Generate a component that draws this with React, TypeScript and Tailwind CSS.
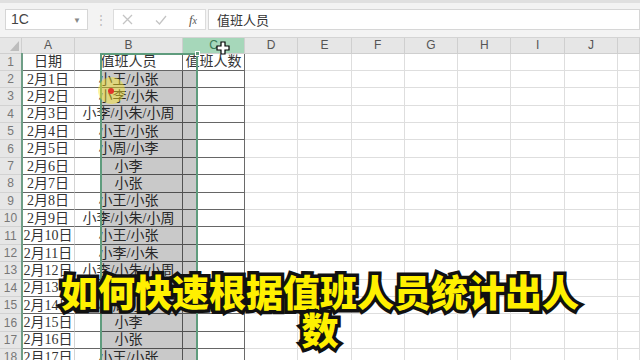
import React from 'react'

const cols = ['A', 'B', 'C', 'D', 'E', 'F', 'G', 'H', 'I', 'J', '']

const rows: [string, string, string][] = [
  ['日期', '值班人员', '值班人数'],
  ['2月1日', '小王/小张', ''],
  ['2月2日', '小李/小朱', ''],
  ['2月3日', '小李/小朱/小周', ''],
  ['2月4日', '小王/小张', ''],
  ['2月5日', '小周/小李', ''],
  ['2月6日', '小李', ''],
  ['2月7日', '小张', ''],
  ['2月8日', '小王/小张', ''],
  ['2月9日', '小李/小朱/小周', ''],
  ['2月10日', '小王/小张', ''],
  ['2月11日', '小李/小朱', ''],
  ['2月12日', '小李/小朱/小周', ''],
  ['2月13日', '小王/小张', ''],
  ['2月14日', '小周/小李', ''],
  ['2月15日', '小李', ''],
  ['2月16日', '小张', ''],
  ['2月17日', '小王/小张', ''],
]

const cellFont = { fontFamily: '"Liberation Serif", "Noto Sans CJK SC", serif' }

function FormulaBar() {
  return (
    <div className="h-[38px] bg-[#f3f3f3] border-t-[3px] border-[#e0e0e0] flex items-start pt-[6px] border-b border-b-[#d4d4d4]">
      <div className="ml-[5px] w-[83px] h-[21px] bg-white border border-[#d6d6d6] flex items-center justify-between pl-[5px] pr-[6px]">
        <span className="text-[14px] text-[#444] font-['Liberation_Sans',sans-serif]">1C</span>
        <span className="text-[8px] text-[#888]">▼</span>
      </div>
      <div className="w-[25px] h-[21px] flex items-center justify-center text-[#bbb] text-[12px]">⋮</div>
      <div className="w-[93px] h-[21px] bg-white border border-[#dcdcdc] flex items-center justify-between px-[8px]">
        <svg width="11" height="11" viewBox="0 0 11 11">
          <path d="M1 1L10 10M10 1L1 10" stroke="#c4c4c4" strokeWidth="1.3" fill="none" />
        </svg>
        <svg width="12" height="10" viewBox="0 0 12 10">
          <path d="M1 5.5L4.5 9L11 1" stroke="#c4c4c4" strokeWidth="1.3" fill="none" />
        </svg>
        <span className="text-[13px] italic text-[#555] font-['Liberation_Serif',serif]">f<span className="text-[10px]">x</span></span>
      </div>
      <div className="ml-[2px] flex-1 h-[21px] bg-white border border-[#d6d6d6] flex items-center pl-[8px]">
        <span className="text-[13px] text-[#333] font-['Noto_Sans_CJK_SC',sans-serif]">值班人员</span>
      </div>
    </div>
  )
}

function Grid() {
  return (
    <div className="grid grid-cols-[22px_53px_108px_62px_repeat(6,53.3px)_53.3px_1fr] grid-rows-[15.5px_repeat(18,17.4px)]">
      <div className="bg-[#e6e6e6] border-r border-b border-[#cfcfcf] relative">
        <svg className="absolute right-[2px] bottom-[2px]" width="9" height="10" viewBox="0 0 9 10">
          <path d="M9 0V10H0Z" fill="#bdbdbd" />
        </svg>
      </div>
      {cols.map((c, i) => (
        <div
          key={'h' + i}
          className={
            'border-r border-b border-[#cfcfcf] flex items-center justify-center text-[12px] font-["Liberation_Sans",sans-serif] ' +
            (c === 'C' ? 'bg-[#a6d7ba] text-[#3b7a57]' : 'bg-[#e6e6e6] text-[#555]')
          }
        >
          {c}
        </div>
      ))}
      {rows.map((r, ri) => (
        <React.Fragment key={ri}>
          <div className="bg-[#e6e6e6] border-r border-b border-[#d2d2d2] flex items-center justify-center text-[12px] text-[#777] font-['Liberation_Sans',sans-serif]">
            {ri + 1}
          </div>
          <div style={cellFont} className="border-r border-r-[#d4d4d4] border-b border-b-[#666] flex items-center justify-center text-[14px] text-[#333] whitespace-nowrap">
            {r[0]}
          </div>
          <div style={cellFont} className="border-r border-r-[#6a6a6a] border-b border-b-[#666] flex items-center justify-center text-[14px] text-[#333] whitespace-nowrap">
            {r[1]}
          </div>
          <div style={cellFont} className="border-r border-r-[#6a6a6a] border-b border-b-[#666] flex items-center justify-center text-[14px] text-[#333] whitespace-nowrap">
            {r[2]}
          </div>
          {cols.slice(3).map((_, ci) => (
            <div key={ci} className="border-r border-b border-[#dedede]" />
          ))}
        </React.Fragment>
      ))}
    </div>
  )
}

export default function App() {
  return (
    <div className="w-[640px] h-[360px] overflow-hidden relative bg-white">
      <FormulaBar />
      <Grid />

      {/* table left edge highlight */}
      <div className="absolute left-[21px] top-[53px] bottom-0 w-[2px] bg-[#6e9e86]" />

      {/* selection shading and box */}
      <div className="absolute left-[102px] top-[71px] w-[95px] bottom-0 bg-[rgba(0,0,0,0.21)]" />
      <div className="absolute left-[100px] top-[53px] w-[98px] bottom-[-4px] border-2 border-[#5f9c7d]" />
      <div className="absolute left-[195px] top-[51px] w-[5px] h-[5px] bg-[#5f9c7d] border border-white" />

      {/* click indicator */}
      <div className="absolute left-[98px] top-[77px] w-[27px] h-[27px] rounded-full bg-[rgba(250,230,40,0.45)]" />
      <div className="absolute left-[108px] top-[88px] w-[6px] h-[6px] rounded-full bg-[#e0352b]" />

      {/* cursor */}
      <svg className="absolute left-[216px] top-[41px]" width="14" height="14" viewBox="0 0 14 14">
        <path d="M5 1H9V5H13V9H9V13H5V9H1V5H5Z" fill="white" stroke="black" strokeWidth="1.2" />
      </svg>

      {/* caption */}
      <div className="absolute left-[55px] right-[55px] top-[272px] text-center text-[37px] leading-[38px] font-black text-[#fff000] font-['Noto_Sans_CJK_SC',sans-serif] [-webkit-text-stroke:7px_#111] [paint-order:stroke_fill]">
        如何快速根据值班人员统计出人数
      </div>
    </div>
  )
}
